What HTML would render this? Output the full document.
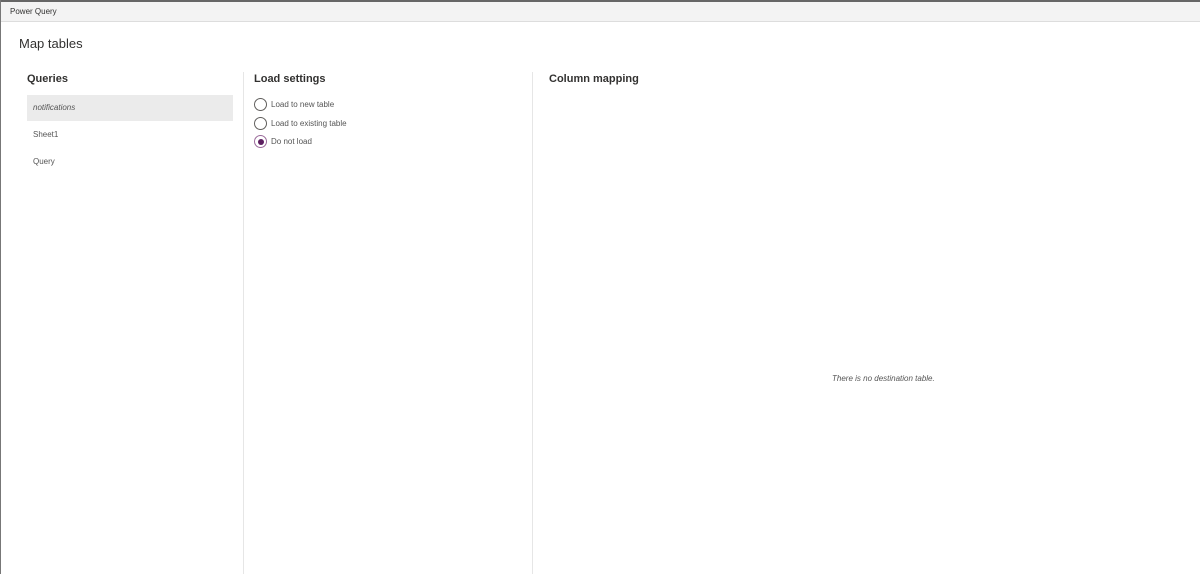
<!DOCTYPE html>
<html><head><style>
body{margin:0;width:1200px;height:574px;overflow:hidden;background:#fff;font-family:"Liberation Sans",sans-serif;color:#323130;position:relative}
.a{position:absolute;white-space:nowrap}
.r{position:absolute;width:11px;height:11px;border:1px solid #605e5c;border-radius:50%;left:254px}
</style></head><body>
<div class="a" style="left:0;top:0;width:1200px;height:2px;background:#666"></div>
<div class="a" style="left:0;top:0;width:1px;height:574px;background:#777"></div>
<div class="a" style="left:1px;top:2px;width:1199px;height:19px;background:#f3f3f3;border-bottom:1px solid #ddd"></div>
<div class="a" style="left:10px;top:7px;font-size:8px">Power Query</div>
<div class="a" style="left:19px;top:36px;font-size:13px">Map tables</div>
<div class="a" style="left:27px;top:73px;font-size:11px;font-weight:bold">Queries</div>
<div class="a" style="left:27px;top:95px;width:206px;height:26px;background:#ebebeb"></div>
<div class="a" style="left:33px;top:103px;font-size:8px;font-style:italic;color:#555">notifications</div>
<div class="a" style="left:33px;top:130px;font-size:8px;color:#555">Sheet1</div>
<div class="a" style="left:33px;top:157px;font-size:8px;color:#555">Query</div>
<div class="a" style="left:243px;top:72px;width:1px;height:502px;background:#e6e6e6"></div>
<div class="a" style="left:532px;top:72px;width:1px;height:502px;background:#e6e6e6"></div>
<div class="a" style="left:254px;top:73px;font-size:11px;font-weight:bold">Load settings</div>
<div class="r" style="top:98px"></div>
<div class="r" style="top:117px"></div>
<div class="r" style="top:135px;border-color:#9a6a9a"><div style="position:absolute;left:2.5px;top:2.5px;width:6px;height:6px;border-radius:50%;background:#5c1f60"></div></div>
<div class="a" style="left:271px;top:100px;font-size:8px;color:#555">Load to new table</div>
<div class="a" style="left:271px;top:119px;font-size:8px;color:#555">Load to existing table</div>
<div class="a" style="left:271px;top:137px;font-size:8px;color:#555">Do not load</div>
<div class="a" style="left:549px;top:73px;font-size:11px;font-weight:bold">Column mapping</div>
<div class="a" style="left:832px;top:374px;font-size:8px;font-style:italic;color:#555">There is no destination table.</div>
</body></html>
